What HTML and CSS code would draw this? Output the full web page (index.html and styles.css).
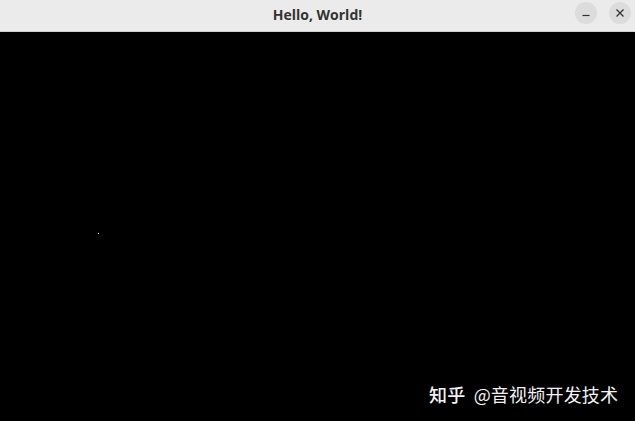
FILE: index.html
```html
<!DOCTYPE html>
<html>
<head>
<meta charset="utf-8">
<link rel="stylesheet" href="styles.css">
</head>
<body>
<div class="window">
  <header class="titlebar">
    <div class="title">Hello, World!</div>
    <div class="controls">
      <button class="btn" aria-label="minimize">
        <svg width="10" height="10" viewBox="0 0 10 10"><path d="M1.5 7.5h7" stroke="#333" stroke-width="1.2"/></svg>
      </button>
      <button class="btn" aria-label="close">
        <svg width="10" height="10" viewBox="0 0 10 10"><path d="M1.5 1.5l7 7M8.5 1.5l-7 7" stroke="#333" stroke-width="1.3"/></svg>
      </button>
    </div>
  </header>
  <main class="canvas">
    <span class="dot"></span>
    <div class="watermark"><span class="zh">知乎</span> @音视频开发技术</div>
  </main>
</div>
</body>
</html>
```
FILE: styles.css
```css
* { box-sizing: border-box; }
html, body { margin: 0; padding: 0; width: 635px; height: 421px; overflow: hidden; background: #000; }
.window { width: 635px; height: 421px; display: flex; flex-direction: column; }
.titlebar {
  height: 32px;
  flex: none;
  background: #ebebeb;
  border-bottom: 1px solid #cfcfcf;
  position: relative;
  display: flex;
  align-items: center;
  justify-content: center;
}
.title {
  font-family: "Open Sans", "DejaVu Sans", sans-serif;
  font-weight: 700;
  font-size: 14px;
  color: #333;
  padding-bottom: 3px;
}
.controls {
  position: absolute;
  right: 4px;
  top: 2px;
  display: flex;
  gap: 12px;
}
.btn {
  width: 22px;
  height: 22px;
  border-radius: 50%;
  border: 0;
  padding: 0;
  background: #dcdcdc;
  display: flex;
  align-items: center;
  justify-content: center;
}
.canvas { flex: 1; background: #000; position: relative; }
.dot { position: absolute; left: 98px; top: 201px; width: 1px; height: 1px; background: #fff; }
.watermark {
  position: absolute;
  left: 429px;
  top: 349px;
  font-family: "Noto Sans CJK SC", sans-serif;
  font-size: 18px;
  color: #f2f2f2;
  letter-spacing: 0.2px;
  white-space: nowrap;
}
.watermark .zh { font-weight: 500; margin-right: 4px; }
```
